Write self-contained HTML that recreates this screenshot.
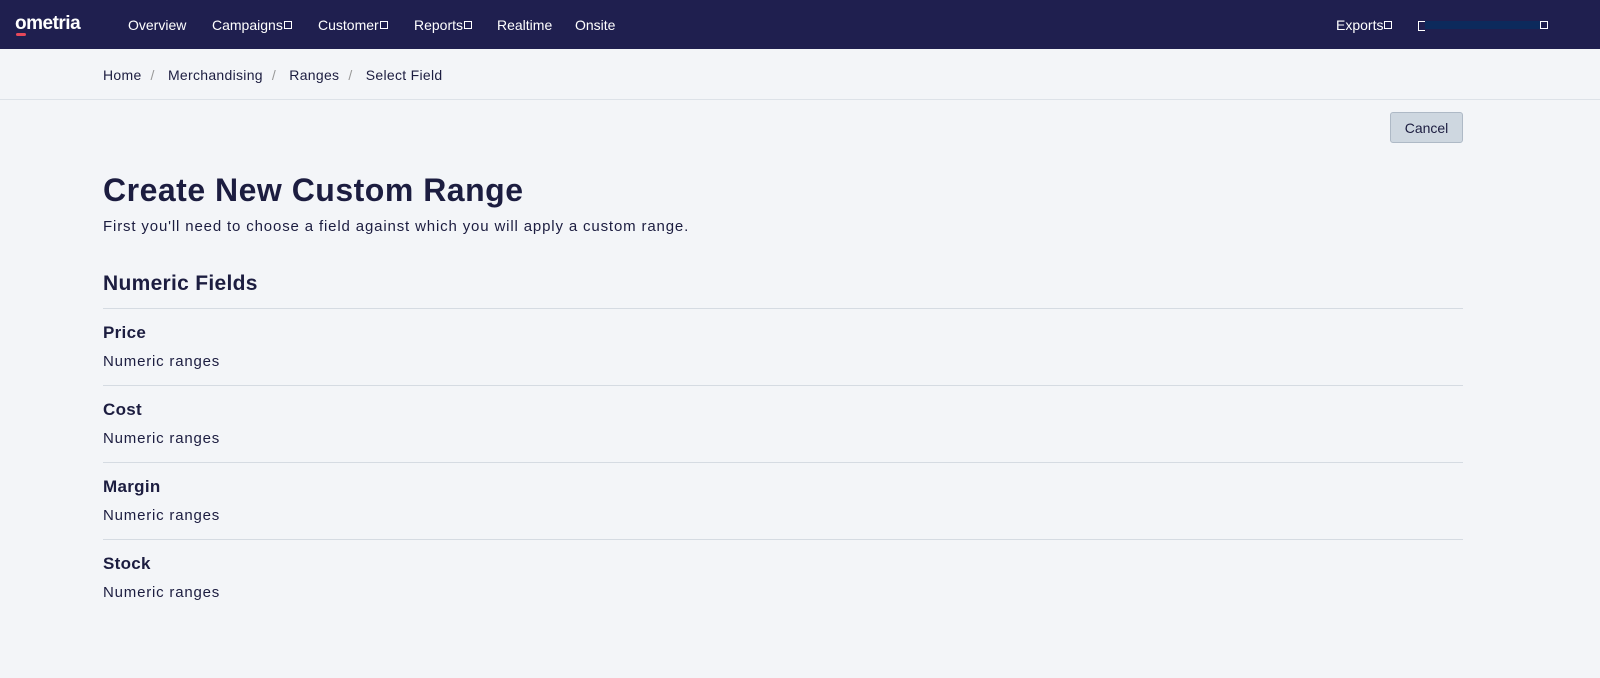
<!DOCTYPE html>
<html><head><style>
body{margin:0;width:1600px;height:678px;background:#f3f5f8;font-family:"Liberation Sans",sans-serif;color:#1c1d40;overflow:hidden}
.nav{height:49px;background:#1f1f4f;position:relative;color:#fff;font-size:14px}
.nav span{position:absolute;top:17px}
.box{display:inline-block;width:6px;height:6px;border:1px solid #fff;margin-left:1px;vertical-align:1px}
.logo{left:15px;top:13px!important;font-size:19px;font-weight:bold;letter-spacing:-0.5px}
.bc{height:50px;border-bottom:1px solid #dde2e8;font-size:14px;line-height:52px;padding-left:103px;letter-spacing:.3px}
.bc i{font-style:normal;color:#999;margin:0 9px}
.btn{position:absolute;left:1390px;top:112px;width:71px;height:29px;background:#ced7e0;border:1px solid #aeb9c6;border-radius:3px;font-size:14px;text-align:center;line-height:30px}
h1{position:absolute;left:103px;top:172px;margin:0;font-size:32px;font-weight:bold;letter-spacing:.5px}
.sub{position:absolute;left:103px;top:218px;font-size:15px;letter-spacing:.85px}
h2{position:absolute;left:103px;top:272px;margin:0;font-size:21px;font-weight:bold;letter-spacing:.3px}
.row{position:absolute;left:103px;width:1360px;border-top:1px solid #d5dbe2;height:76px}
.row b{position:absolute;top:14px;font-size:17px;letter-spacing:.3px}
.row div{position:absolute;top:44px;font-size:15px;letter-spacing:.8px}
</style></head><body>
<div class="nav">
<span class="logo">ometria<span style="position:absolute;left:1px;top:20px;width:10px;height:3px;background:#e6485a;border-radius:2px"></span></span>
<span style="left:128px">Overview</span>
<span style="left:212px">Campaigns<i class="box"></i></span>
<span style="left:318px">Customer<i class="box"></i></span>
<span style="left:414px">Reports<i class="box"></i></span>
<span style="left:497px">Realtime</span>
<span style="left:575px">Onsite</span>
<span style="left:1336px">Exports<i class="box"></i></span>
<span style="left:1418px;top:21px!important;width:6px;height:8px;border:1px solid #fff;border-right:none"></span>
<span style="left:1425px;top:21px!important;width:115px;height:8px;background:#0c2a5c"></span>
<span style="left:1540px;top:21px!important;width:6px;height:6px;border:1px solid #fff"></span>
</div>
<div class="bc">Home<i>/</i> Merchandising<i>/</i> Ranges<i>/</i> Select Field</div>
<div class="btn">Cancel</div>
<h1>Create New Custom Range</h1>
<div class="sub">First you'll need to choose a field against which you will apply a custom range.</div>
<h2>Numeric Fields</h2>
<div class="row" style="top:308px"><b>Price</b><div>Numeric ranges</div></div>
<div class="row" style="top:385px"><b>Cost</b><div>Numeric ranges</div></div>
<div class="row" style="top:462px"><b>Margin</b><div>Numeric ranges</div></div>
<div class="row" style="top:539px"><b>Stock</b><div>Numeric ranges</div></div>
</body></html>
